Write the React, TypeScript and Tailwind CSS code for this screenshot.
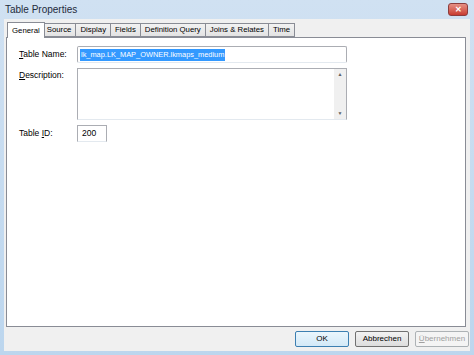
const tabs = [
  "General",
  "Source",
  "Display",
  "Fields",
  "Definition Query",
  "Joins & Relates",
  "Time",
];

function Tab({ label, active }: { label: string; active?: boolean }) {
  if (active) {
    return (
      <div className="relative z-10 -mr-[2px] -mb-px flex h-[16px] items-center border border-b-0 border-[#898c95] bg-white px-[4px] text-[7.8px] text-black">
        {label}
      </div>
    );
  }
  return (
    <div className="flex h-[14px] items-center border border-l-0 border-[#898c95] bg-gradient-to-b from-[#f2f2f2] to-[#e3e3e3] px-[4px] text-[7.8px] text-black">
      {label}
    </div>
  );
}

function Button({
  children,
  primary,
  disabled,
}: {
  children: React.ReactNode;
  primary?: boolean;
  disabled?: boolean;
}) {
  return (
    <div
      className={
        "flex h-[16px] w-[54px] items-center justify-center rounded-[2px] border text-[8px] " +
        (primary
          ? "border-[#3c7fb1] bg-gradient-to-b from-[#eaf6fd] to-[#d3e9f7] text-black"
          : disabled
            ? "border-[#adb2b5] bg-[#f4f4f4] text-[#a0a0a0]"
            : "border-[#707070] bg-gradient-to-b from-[#f2f2f2] to-[#dddddd] text-black")
      }
    >
      {children}
    </div>
  );
}

export default function App() {
  return (
    <div
      className="flex h-[355px] w-[474px] flex-col bg-gradient-to-b from-[#d0e1f2] to-[#bcd6ee]"
      style={{ fontFamily: '"Liberation Sans", Arial, sans-serif' }}
    >
      {/* title bar */}
      <div className="flex h-[19px] items-center justify-between pl-[5px] pr-[6px]">
        <span className="text-[10px] text-[#1e2a3a]">Table Properties</span>
        <div className="flex h-[13px] w-[20px] items-center justify-center rounded-[3px] border border-[#8c3d3d] bg-gradient-to-b from-[#e58f85] to-[#c83a30] text-[8px] font-bold leading-none text-white">
          ✕
        </div>
      </div>

      {/* client */}
      <div className="mx-[4px] mb-[4px] flex flex-1 flex-col bg-[#f0f0f0]">
        <div className="flex items-end pl-[3px] pt-[3px]">
          {tabs.map((t, i) => (
            <Tab key={t} label={t} active={i === 0} />
          ))}
        </div>

        <div className="ml-[2px] mr-[4px] flex h-[290px] flex-col gap-[5px] border border-[#898c95] bg-white pl-[12px] pt-[8px]">
          <div className="flex items-center">
            <span className="w-[58px] text-[8.5px] text-black">
              <u>T</u>able Name:
            </span>
            <div className="flex h-[17px] w-[270px] items-center rounded-[2px] border border-[#abadb3] border-b-[#e3e9ef] px-[2px]">
              <span className="bg-[#3399ff] px-px text-[7.4px] leading-[12px] text-white">
                lk_map.LK_MAP_OWNER.lkmaps_medium
              </span>
            </div>
          </div>

          <div className="flex items-start">
            <span className="w-[58px] pt-[1px] text-[8.5px] text-black">
              <u>D</u>escription:
            </span>
            <div className="flex h-[52px] w-[270px] justify-end border border-[#abadb3] border-b-[#e3e9ef]">
              <div className="flex w-[12px] flex-col items-center justify-between bg-[#f0f0f0] py-[3px] text-[5px] leading-none text-[#606060]">
                <span>▲</span>
                <span>▼</span>
              </div>
            </div>
          </div>

          <div className="flex items-center">
            <span className="w-[58px] text-[8.5px] text-black">
              Table <u>I</u>D:
            </span>
            <div className="flex h-[17px] w-[30px] items-center border border-[#abadb3] border-b-[#e3e9ef] px-[4px] text-[8.5px] text-black">
              200
            </div>
          </div>
        </div>

        <div className="flex flex-1 items-center justify-end gap-[6px] pr-[1px]">
          <Button primary>OK</Button>
          <Button>Abbrechen</Button>
          <Button disabled>
            <u>Ü</u>bernehmen
          </Button>
        </div>
      </div>
    </div>
  );
}
